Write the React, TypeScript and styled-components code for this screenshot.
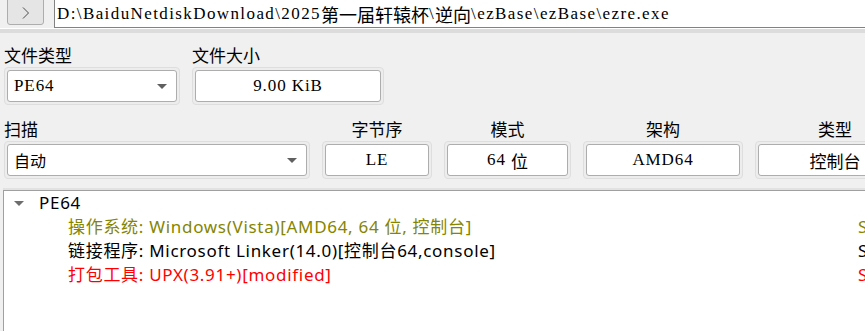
import React from 'react';
import styled, { createGlobalStyle } from 'styled-components';

const GlobalStyle = createGlobalStyle`
  html, body {
    margin: 0;
    padding: 0;
    background: #f0f0f0;
  }
  body {
    width: 865px;
    height: 331px;
    overflow: hidden;
    font-family: 'Noto Sans', 'Noto Sans CJK SC', sans-serif;
    color: #000;
  }
`;

const Window = styled.div`
  display: flex;
  flex-direction: column;
  height: 331px;
  overflow: hidden;
`;

const TopBar = styled.div`
  display: flex;
  align-items: flex-end;
  gap: 10px;
  height: 28px;
  padding-left: 7px;
  overflow: hidden;
`;

const NavButton = styled.div`
  flex: none;
  width: 37px;
  height: 30px;
  margin-bottom: 3px;
  box-sizing: border-box;
  border: 1px solid #adadad;
  border-radius: 3px;
  background: #e5e5e5;
  display: flex;
  align-items: center;
  justify-content: center;
  padding-top: 5px;
`;

const PathField = styled.div`
  flex: 1;
  height: 32px;
  box-sizing: border-box;
  border: 1px solid #828282;
  border-right: none;
  background: #fff;
  display: flex;
  align-items: center;
  padding: 4px 0 0 2px;
  font-family: 'Liberation Serif', 'Noto Sans CJK SC', serif;
  font-size: 17px;
  letter-spacing: 1.4px;
  white-space: nowrap;
`;

const Han = styled.span<{ $size: number }>`
  font-family: 'Noto Sans CJK SC', sans-serif;
  font-size: ${(p) => p.$size}px;
  letter-spacing: 0;
`;

const Separator = styled.div`
  height: 5px;
  background: linear-gradient(#ffffff 0 1px, #dcdcdc 1px);
`;

const FieldRow = styled.div<{ $top: number }>`
  display: flex;
  gap: 12px;
  padding: 0 4px;
  margin-top: ${(p) => p.$top}px;
`;

const Field = styled.div<{ $width: number }>`
  flex: none;
  width: ${(p) => p.$width}px;
  display: flex;
  flex-direction: column;
  gap: 2px;
`;

const Label = styled.div<{ $center?: boolean }>`
  font-family: 'Noto Sans CJK SC', sans-serif;
  font-size: 17px;
  line-height: 20px;
  height: 20px;
  text-align: ${(p) => (p.$center ? 'center' : 'left')};
  white-space: nowrap;
`;

const Frame = styled.div`
  border: 1px solid #dedede;
  border-radius: 4px;
  padding: 2px;
  background: #ededed;
`;

const Box = styled.div<{ $center?: boolean }>`
  position: relative;
  height: 32px;
  box-sizing: border-box;
  border: 1px solid #adadad;
  border-radius: 3px;
  background: #fff;
  display: flex;
  align-items: center;
  justify-content: ${(p) => (p.$center ? 'center' : 'flex-start')};
  padding: 0 6px;
  font-family: 'Liberation Serif', 'Noto Sans CJK SC', serif;
  font-size: 17px;
  letter-spacing: 0.9px;
  white-space: nowrap;
`;

const DropArrow = styled.span`
  position: absolute;
  right: 9px;
  top: 13px;
  width: 0;
  height: 0;
  border-left: 5px solid transparent;
  border-right: 5px solid transparent;
  border-top: 5px solid #606060;
`;

const TreePanel = styled.div`
  flex: 1;
  margin-top: 11px;
  margin-left: 3px;
  background: #fff;
  border-top: 1px solid #a0a0a0;
  border-left: 1px solid #a0a0a0;
  box-shadow: 0 -2px 0 #e2e2e2;
  overflow: hidden;
`;

const TreeRow = styled.div<{ $color: string }>`
  display: grid;
  grid-template-columns: 854px 200px;
  height: 24px;
  line-height: 24px;
  font-size: 17px;
  letter-spacing: 0.7px;
  color: ${(p) => p.$color};
  white-space: nowrap;
`;

const TreeName = styled.div<{ $indent: number }>`
  display: flex;
  align-items: center;
  padding-left: ${(p) => p.$indent}px;
`;

const Expander = styled.span`
  width: 0;
  height: 0;
  margin-right: 15px;
  border-left: 5px solid transparent;
  border-right: 5px solid transparent;
  border-top: 5px solid #6d6d6d;
`;

const rows = [
  { text: '操作系统: Windows(Vista)[AMD64, 64 位, 控制台]', color: '#858500' },
  { text: '链接程序: Microsoft Linker(14.0)[控制台64,console]', color: '#000000' },
  { text: '打包工具: UPX(3.91+)[modified]', color: '#ff0000' },
];

export default function App() {
  return (
    <Window>
      <GlobalStyle />
      <TopBar>
        <NavButton>
          <svg width="8" height="12" viewBox="0 0 8 12">
            <polyline points="1,0.5 6.5,6 1,11.5" fill="none" stroke="#4a4a4a" strokeWidth="1" />
          </svg>
        </NavButton>
        <PathField>
          D:\BaiduNetdiskDownload\2025<Han $size={18}>第一届轩辕杯</Han>\<Han $size={18}>逆向</Han>
          \ezBase\ezBase\ezre.exe
        </PathField>
      </TopBar>
      <Separator />

      <FieldRow $top={12}>
        <Field $width={176}>
          <Label>文件类型</Label>
          <Frame>
            <Box>
              PE64
              <DropArrow />
            </Box>
          </Frame>
        </Field>
        <Field $width={192}>
          <Label>文件大小</Label>
          <Frame>
            <Box $center>9.00 KiB</Box>
          </Frame>
        </Field>
      </FieldRow>

      <FieldRow $top={14}>
        <Field $width={306}>
          <Label>扫描</Label>
          <Frame>
            <Box>
              <Han $size={16}>自动</Han>
              <DropArrow />
            </Box>
          </Frame>
        </Field>
        <Field $width={110}>
          <Label $center>字节序</Label>
          <Frame>
            <Box $center>LE</Box>
          </Frame>
        </Field>
        <Field $width={127}>
          <Label $center>模式</Label>
          <Frame>
            <Box $center>
              {'64\u00a0'}
              <Han $size={17}>位</Han>
            </Box>
          </Frame>
        </Field>
        <Field $width={160}>
          <Label $center>架构</Label>
          <Frame>
            <Box $center>AMD64</Box>
          </Frame>
        </Field>
        <Field $width={160}>
          <Label $center>类型</Label>
          <Frame>
            <Box $center>
              <Han $size={17}>控制台</Han>
            </Box>
          </Frame>
        </Field>
      </FieldRow>

      <TreePanel>
        <TreeRow $color="#000000">
          <TreeName $indent={10}>
            <Expander />
            PE64
          </TreeName>
          <div />
        </TreeRow>
        {rows.map((row) => (
          <TreeRow key={row.text} $color={row.color}>
            <TreeName $indent={64}>{row.text}</TreeName>
            <div>S</div>
          </TreeRow>
        ))}
      </TreePanel>
    </Window>
  );
}
